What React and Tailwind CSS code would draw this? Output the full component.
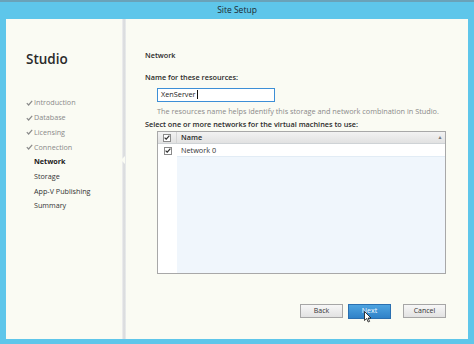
import React from "react";

const Check = ({ className = "" }) => (
  <svg width="7" height="6" viewBox="0 0 7 6" className={className}>
    <path d="M0.8 3.2 L2.6 5 L6.2 0.8" fill="none" stroke="currentColor" strokeWidth="1.2" />
  </svg>
);

const Box = () => (
  <div className="w-[8px] h-[8px] border border-[#8a8a8a] bg-white flex items-center justify-center text-[#333]">
    <svg width="6" height="5" viewBox="0 0 6 5">
      <path d="M0.6 2.6 L2.2 4.2 L5.4 0.6" fill="none" stroke="currentColor" strokeWidth="1.2" />
    </svg>
  </div>
);

export default function App() {
  const steps = [
    { t: "Introduction", done: true },
    { t: "Database", done: true },
    { t: "Licensing", done: true },
    { t: "Connection", done: true },
    { t: "Network", active: true },
    { t: "Storage" },
    { t: "App-V Publishing" },
    { t: "Summary" },
  ];
  return (
    <div
      className="w-[474px] h-[344px] bg-[#5ec6ea] flex flex-col overflow-hidden"
      style={{ fontFamily: '"Open Sans", "Noto Sans", sans-serif' }}
    >
      <div className="h-[2px] bg-[#6aa2b8]" />
      <div className="h-[17px] flex items-center justify-center text-[8.5px] text-[#1c2a33]">Site Setup</div>
      <div className="flex-1 mx-[6px] mb-[5px] bg-[#fafbf3] flex">
        {/* Sidebar */}
        <div className="w-[116px] flex flex-col pl-[20px] pt-[34px]">
          <div className="text-[13.5px] text-[#2a2a2a] leading-none font-semibold">Studio</div>
          <div className="mt-[29px] flex flex-col">
            {steps.map((s) => (
              <div key={s.t} className="h-[14.7px] flex items-center text-[7.2px]">
                <div className="w-[8px] flex items-center text-[#8a8a8a]">{s.done && <Check />}</div>
                <span
                  className={
                    s.active
                      ? "font-bold text-[#1a1a1a]"
                      : s.done
                      ? "text-[#8a8a8a]"
                      : "text-[#333]"
                  }
                >
                  {s.t}
                </span>
              </div>
            ))}
          </div>
        </div>
        {/* Divider */}
        <div className="relative w-[4px] bg-gradient-to-r from-[#f1f1f1] via-[#d6d8da] to-[#eceeee]">
          <div className="absolute left-[-1px] top-[137px] w-0 h-0 border-y-[4px] border-y-transparent border-r-[4px] border-r-[#fafbf3]" />
        </div>
        {/* Content */}
        <div className="flex-1 flex flex-col pl-[19px] pr-[22px] pt-[33px] text-[7.3px] text-[#2a2a2a]">
          <div className="font-semibold leading-none">Network</div>
          <div className="mt-[15px] font-semibold leading-none">Name for these resources:</div>
          <div className="mt-[6px] ml-[12px] w-[118px] h-[14px] border border-[#3d8fd6] bg-white flex items-center pl-[3px] text-[7.3px] text-[#222]">
            XenServer<span className="w-px h-[9px] bg-[#111] ml-[1px]" />
          </div>
          <div className="mt-[6px] ml-[12px] text-[#8a8a8a] leading-none">
            The resources name helps identify this storage and network combination in Studio.
          </div>
          <div className="mt-[6px] font-semibold leading-none">
            Select one or more networks for the virtual machines to use:
          </div>
          <div className="mt-[3px] ml-[12px] h-[143px] border border-[#a8a8a8] bg-white flex flex-col">
            <div className="h-[12px] flex bg-gradient-to-b from-[#f2f2f2] to-[#e2e2e2] border-b border-[#cfd3d6]">
              <div className="w-[19px] flex items-center justify-center border-r border-[#d4d4d4]">
                <Box />
              </div>
              <div className="flex-1 flex items-center pl-[4px] font-semibold">Name</div>
              <div className="w-[10px] flex items-center justify-center text-[#777] text-[5px]">▲</div>
            </div>
            <div className="flex-1 flex">
              <div className="w-[19px] flex flex-col">
                <div className="h-[13px] flex items-center justify-center">
                  <Box />
                </div>
              </div>
              <div className="flex-1 flex flex-col bg-[#f0f6fc]">
                <div className="h-[13px] flex items-center pl-[4px] text-[#333] bg-white border-b border-[#e2ecf5]">
                  Network 0
                </div>
              </div>
            </div>
          </div>
          <div className="flex-1" />
          <div className="flex justify-end gap-[5px] mb-[20px] text-[7px]">
            <div className="w-[43px] h-[14px] border border-[#a6a6a6] bg-gradient-to-b from-[#f7f7f7] to-[#e2e2e2] flex items-center justify-center text-[#333]">
              Back
            </div>
            <div className="relative w-[43px] h-[15px] border border-[#2a6fb0] bg-gradient-to-b from-[#4da3e0] to-[#2f82c8] flex items-center justify-center text-white">
              Next
              <svg className="absolute left-[15px] top-[6px]" width="8" height="12" viewBox="0 0 8 12">
                <path d="M0.5 0.5 L0.5 9.5 L2.7 7.5 L4.2 11 L5.6 10.4 L4.1 7 L7 7 Z" fill="white" stroke="#111" strokeWidth="0.8" />
              </svg>
            </div>
            <div className="ml-[7px] w-[43px] h-[14px] border border-[#a6a6a6] bg-gradient-to-b from-[#f7f7f7] to-[#e2e2e2] flex items-center justify-center text-[#333]">
              Cancel
            </div>
          </div>
        </div>
      </div>
    </div>
  );
}
